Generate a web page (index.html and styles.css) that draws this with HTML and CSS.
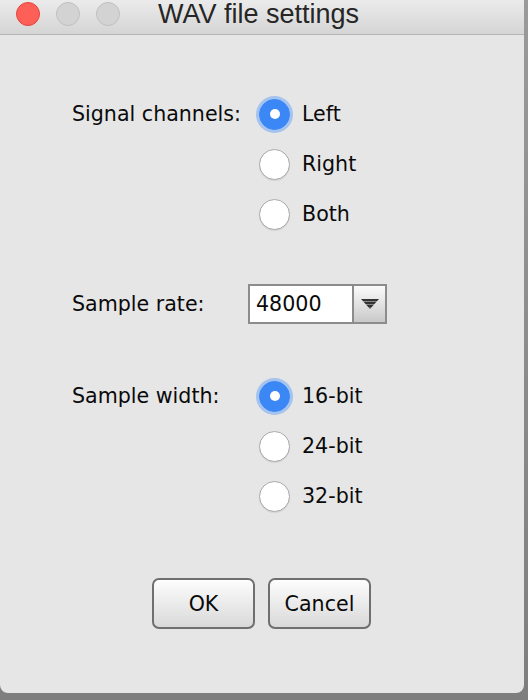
FILE: index.html
```html
<!DOCTYPE html>
<html>
<head>
<meta charset="utf-8">
<link rel="stylesheet" href="styles.css">
</head>
<body>
<div class="window">
  <div class="titlebar">
    <div class="lights">
      <span class="light close"></span>
      <span class="light"></span>
      <span class="light"></span>
    </div>
    <div class="title">WAV file settings</div>
  </div>
  <div class="content">
    <div class="section channels">
      <div class="label">Signal channels:</div>
      <div class="options">
        <div class="opt"><span class="radio on"></span><span class="opt-text">Left</span></div>
        <div class="opt"><span class="radio"></span><span class="opt-text">Right</span></div>
        <div class="opt"><span class="radio"></span><span class="opt-text">Both</span></div>
      </div>
    </div>
    <div class="section rate">
      <div class="label">Sample rate:</div>
      <div class="combo">
        <span class="combo-value">48000</span>
        <span class="combo-btn">
          <svg width="18" height="10" viewBox="0 0 18 10">
            <defs>
              <clipPath id="tri"><polygon points="0,0 18,0 9,10"/></clipPath>
            </defs>
            <g clip-path="url(#tri)">
              <rect x="0" y="0" width="18" height="2" fill="#333"/>
              <rect x="0" y="2" width="18" height="1" fill="#888"/>
              <rect x="0" y="3" width="18" height="2" fill="#333"/>
              <rect x="0" y="5" width="18" height="1" fill="#888"/>
              <rect x="0" y="6" width="18" height="2" fill="#333"/>
              <rect x="0" y="8" width="18" height="2" fill="#555"/>
            </g>
          </svg>
        </span>
      </div>
    </div>
    <div class="section width">
      <div class="label">Sample width:</div>
      <div class="options">
        <div class="opt"><span class="radio on"></span><span class="opt-text">16-bit</span></div>
        <div class="opt"><span class="radio"></span><span class="opt-text">24-bit</span></div>
        <div class="opt"><span class="radio"></span><span class="opt-text">32-bit</span></div>
      </div>
    </div>
    <div class="buttons">
      <button class="btn">OK</button>
      <button class="btn">Cancel</button>
    </div>
  </div>
</div>
</body>
</html>
```

FILE: styles.css
```css
html, body {
  margin: 0;
  padding: 0;
}
body {
  width: 528px;
  height: 700px;
  background: linear-gradient(to bottom, #9a9a9a, #7e7e7e);
  font-family: "DejaVu Sans", sans-serif;
  overflow: hidden;
}
.window {
  width: 524px;
  height: 693px;
  background: #e6e6e6;
  border-radius: 0 0 8px 8px;
  overflow: hidden;
}
.titlebar {
  height: 35px;
  box-sizing: border-box;
  border-bottom: 1px solid #b4b4b4;
  background: linear-gradient(to bottom, #ebebeb, #d5d5d5);
  display: flex;
  align-items: center;
}
.lights {
  display: flex;
  gap: 16px;
  padding-left: 16px;
  margin-top: -6px;
}
.light {
  width: 22px;
  height: 22px;
  border-radius: 50%;
  background: #d3d3d3;
  border: 1px solid #c0c0c0;
}
.light.close {
  background: #fe5f57;
  border-color: #e2463f;
}
.title {
  margin-left: 38px;
  margin-top: -6px;
  font-family: "Liberation Sans", sans-serif;
  font-size: 27px;
  color: #262626;
}
.content {
  padding-left: 72px;
  padding-top: 54px;
  display: flex;
  flex-direction: column;
}
.section {
  display: flex;
  align-items: flex-start;
}
.label {
  width: 176px;
  height: 50px;
  display: flex;
  align-items: center;
  font-size: 20.6px;
  color: #0a0a0a;
}
.options {
  display: flex;
  flex-direction: column;
  padding-left: 11px;
}
.opt {
  height: 50px;
  display: flex;
  align-items: center;
}
.radio {
  width: 29px;
  height: 29px;
  border-radius: 50%;
  background: #fff;
  border: 1px solid #a9a9a9;
  box-shadow: 0 1px 1px rgba(0,0,0,0.08);
  position: relative;
}
.radio.on {
  background: #3b87f6;
  border-color: #3b87f6;
  box-shadow: 0 0 0 3px rgba(110,165,245,0.55);
}
.radio.on::after {
  content: "";
  position: absolute;
  left: 9.5px;
  top: 9.5px;
  width: 10px;
  height: 10px;
  border-radius: 50%;
  background: #fff;
}
.opt-text {
  margin-left: 12px;
  font-size: 20.6px;
  color: #0a0a0a;
}
.rate {
  margin-top: 40px;
}
.combo {
  margin-top: 5px;
  width: 139px;
  height: 40px;
  box-sizing: border-box;
  border: 2px solid #8c8c8c;
  background: #fff;
  display: flex;
}
.combo-value {
  flex: 1;
  display: flex;
  align-items: center;
  padding-left: 6px;
  font-size: 20.6px;
  color: #0a0a0a;
}
.combo-btn {
  width: 31px;
  border-left: 2px solid #8c8c8c;
  background: linear-gradient(to bottom, #fbfbfb, #c9c9c9);
  display: flex;
  align-items: center;
  justify-content: center;
}
.width {
  margin-top: 42px;
}
.buttons {
  margin-top: 57px;
  margin-left: 80px;
  display: flex;
  gap: 13px;
}
.btn {
  width: 103px;
  height: 51px;
  box-sizing: border-box;
  border: 2px solid #6f6f6f;
  border-radius: 7px;
  background: linear-gradient(to bottom, #fdfdfd, #d9d9d9);
  font-family: "DejaVu Sans", sans-serif;
  font-size: 20.6px;
  color: #0a0a0a;
  padding: 0;
}
```
